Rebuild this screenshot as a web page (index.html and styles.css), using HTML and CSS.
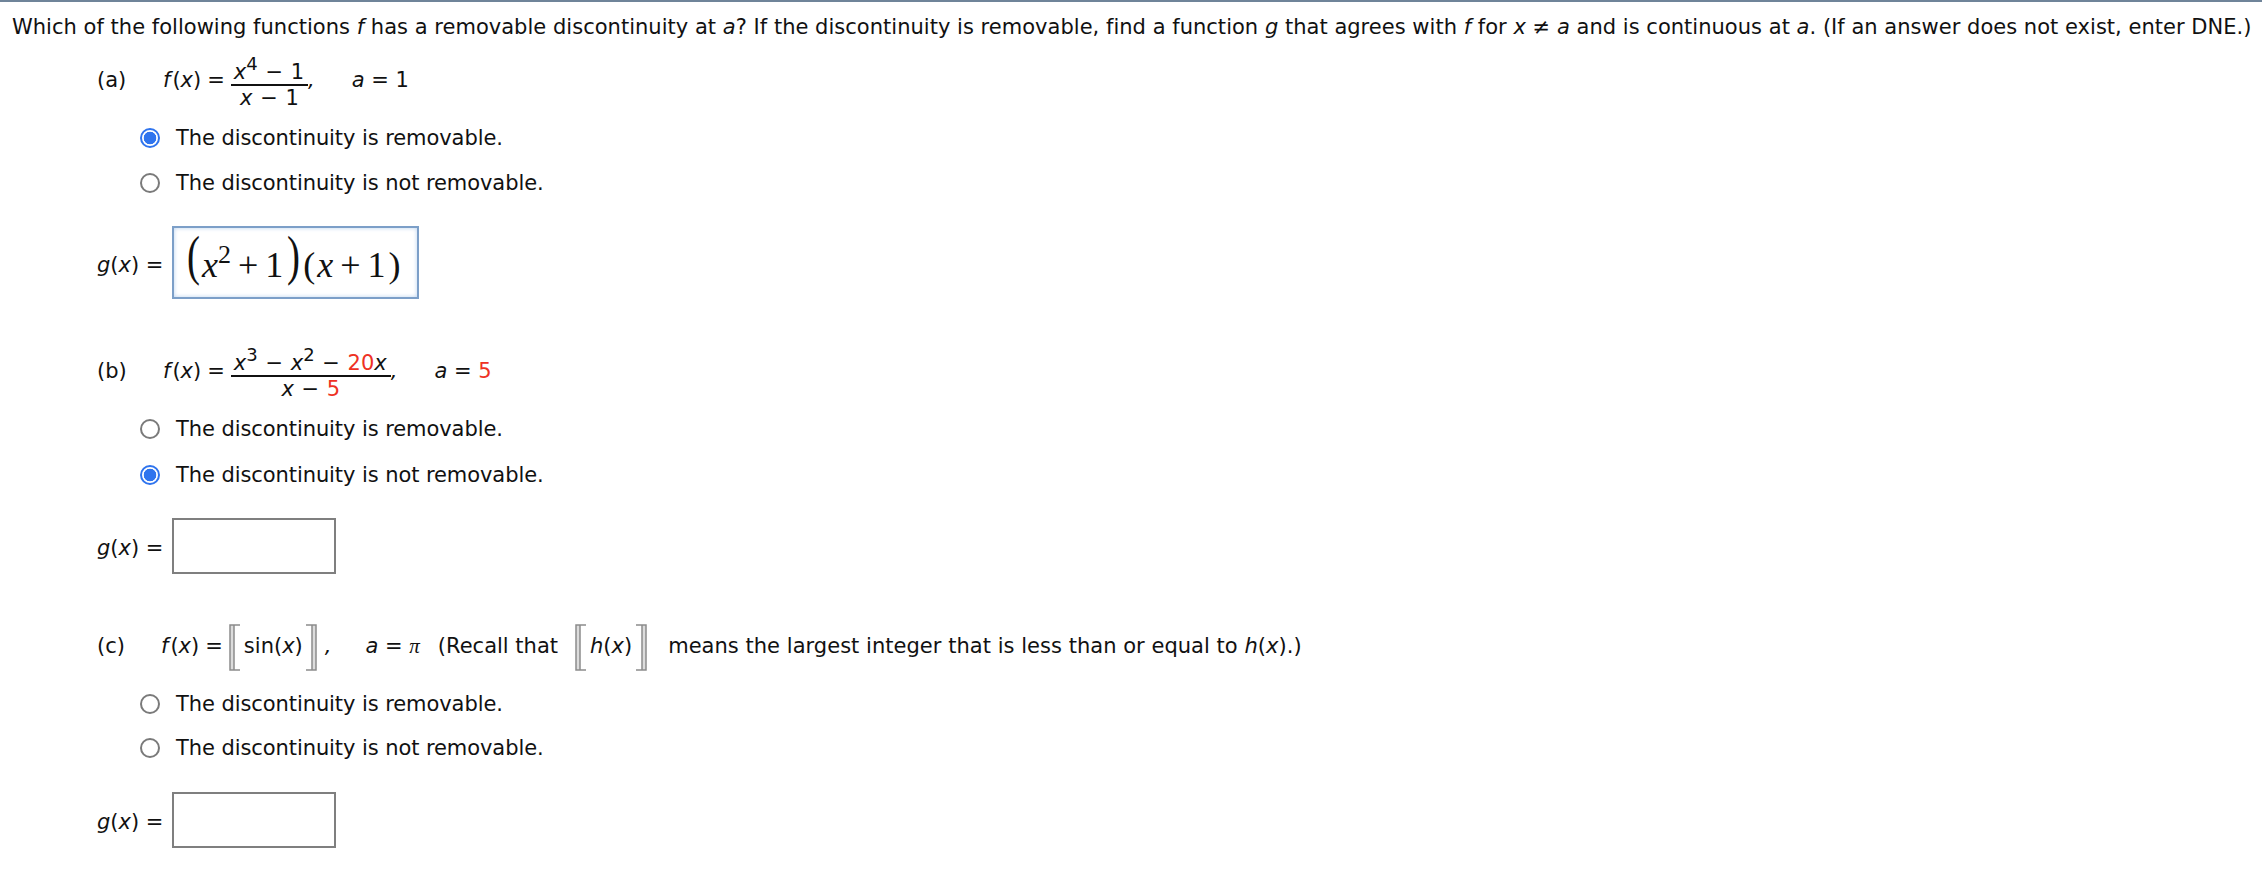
FILE: index.html
```html
<!DOCTYPE html>
<html lang="en">
<head>
<meta charset="utf-8">
<title>Removable discontinuity</title>
<link rel="stylesheet" href="styles.css">
</head>
<body>
<main class="sheet">
  <p class="prompt">Which of the following functions <i>f</i> has a removable discontinuity at <i>a</i>? If the discontinuity is removable, find a function <i>g</i> that agrees with <i>f</i> for <i>x</i> ≠ <i>a</i> and is continuous at <i>a</i>. (If an answer does not exist, enter DNE.)</p>

  <section class="part part-a">
    <div class="formula">
      <span class="tag">(a)</span>
      <span class="expr"><i class="fn">f</i>(<i>x</i>)<span class="eq">=</span><span class="frac"><span class="num"><i>x</i><sup>4</sup> − 1</span><span class="den"><i>x</i> − 1</span></span><i class="comma">,</i></span>
      <span class="point"><i>a</i> = 1</span>
    </div>
    <label class="choice first"><input type="radio" name="a" checked><span>The discontinuity is removable.</span></label>
    <label class="choice"><input type="radio" name="a"><span>The discontinuity is not removable.</span></label>
    <div class="answer answer-a">
      <span class="g"><i>g</i>(<i>x</i>) =</span>
      <div class="mathbox focused">
        <span class="big big-open">(</span><i class="mx">x</i><sup class="ms">2</sup><span class="mop">+</span><span class="md">1</span><span class="big big-close">)</span><span class="mid mid-open">(</span><i class="mx">x</i><span class="mop">+</span><span class="md">1</span><span class="mid mid-close">)</span>
      </div>
    </div>
  </section>

  <section class="part part-b">
    <div class="formula">
      <span class="tag">(b)</span>
      <span class="expr"><i class="fn">f</i>(<i>x</i>)<span class="eq">=</span><span class="frac"><span class="num"><i>x</i><sup>3</sup> − <i>x</i><sup>2</sup> − <span class="red">20</span><i>x</i></span><span class="den"><i>x</i> − <span class="red">5</span></span></span><i class="comma">,</i></span>
      <span class="point"><i>a</i> = <span class="red">5</span></span>
    </div>
    <label class="choice first"><input type="radio" name="b"><span>The discontinuity is removable.</span></label>
    <label class="choice"><input type="radio" name="b" checked><span>The discontinuity is not removable.</span></label>
    <div class="answer">
      <span class="g"><i>g</i>(<i>x</i>) =</span>
      <input class="field" type="text" aria-label="g of x">
    </div>
  </section>

  <section class="part part-c">
    <div class="formula">
      <span class="tag tag-c">(c)</span>
      <span class="expr"><i class="fn">f</i>(<i>x</i>)<span class="eq">=</span></span>
      <svg class="bk bk-l" viewBox="0 0 12 47" aria-hidden="true"><path class="bk-fill" d="M1 1h4v45H1z"/><path d="M11 1H1v45h10M5 1v45"/></svg>
      <span class="inner">sin(<i>x</i>)</span>
      <svg class="bk bk-r" viewBox="0 0 12 47" aria-hidden="true"><path class="bk-fill" d="M7 1h4v45H7z"/><path d="M1 1h10v45H1M7 1v45"/></svg>
      <i class="comma-c">,</i>
      <span class="point-c"><i>a</i> = <span class="pi">π</span></span>
      <span class="recall">(Recall that</span>
      <svg class="bk bk-l2" viewBox="0 0 12 47" aria-hidden="true"><path class="bk-fill" d="M1 1h4v45H1z"/><path d="M11 1H1v45h10M5 1v45"/></svg>
      <span class="inner"><i>h</i>(<i>x</i>)</span>
      <svg class="bk bk-r bk-r2" viewBox="0 0 12 47" aria-hidden="true"><path class="bk-fill" d="M7 1h4v45H7z"/><path d="M1 1h10v45H1M7 1v45"/></svg>
      <span class="means">means the largest integer that is less than or equal to <i>h</i>(<i>x</i>).)</span>
    </div>
    <label class="choice first"><input type="radio" name="c"><span>The discontinuity is removable.</span></label>
    <label class="choice"><input type="radio" name="c"><span>The discontinuity is not removable.</span></label>
    <div class="answer">
      <span class="g"><i>g</i>(<i>x</i>) =</span>
      <input class="field" type="text" aria-label="g of x">
    </div>
  </section>
</main>
</body>
</html>
```
FILE: styles.css
```css
* { box-sizing: border-box; }
html, body { margin: 0; padding: 0; background: #fff; }
body {
  font-family: "DejaVu Sans", Verdana, sans-serif;
  font-size: 21px;
  color: #111;
  overflow: hidden;
}
.sheet { border-top: 2px solid #6f8499; height: 878px; }
.prompt {
  margin: 10px 0 0 12px;
  line-height: 30px;
  height: 30px;
  white-space: nowrap;
  letter-spacing: .022px;
}
.part { padding-left: 97px; }
.part-a { margin-top: 18px; }
.part-b { margin-top: 52px; }
.part-c { margin-top: 52px; }

.formula {
  display: flex;
  align-items: baseline;
  height: 40px;
  line-height: 40px;
  white-space: nowrap;
}
.tag { width: 66px; }
.tag-c { width: 64px; }
.fn { margin-right: 2px; }
.eq { margin: 0 6px; }
.frac sup { font-size: 18px; line-height: 0; vertical-align: 9px; }
.frac {
  display: inline-flex;
  flex-direction: column;
  align-items: center;
  vertical-align: 8px;
}
.num {
  line-height: 24px;
  border-bottom: 2px solid #111;
  padding: 0 4px 0 3px;
  word-spacing: 1px;
}
.den { line-height: 24px; word-spacing: 1px; }
.point { margin-left: 37px; }
.red { color: #ee3124; }
.choice {
  display: flex;
  align-items: center;
  height: 30px;
  line-height: 30px;
  padding-left: 43px;
  margin-top: 15px;
  letter-spacing: -.08px;
}
.choice.first { margin-top: 23px; }
.part-b .choice { margin-top: 16px; }
.part-b .choice.first { margin-top: 23px; }
.part-c .choice { margin-top: 14px; }
.part-c .choice.first { margin-top: 23px; }
.choice input {
  appearance: none;
  -webkit-appearance: none;
  width: 20px;
  height: 20px;
  margin: 0 16px 0 0;
  border: 2px solid #7a7a7a;
  border-radius: 50%;
  background: #fff;
  flex: none;
}
.choice input:checked {
  border-color: #2f74ee;
  background: radial-gradient(circle, #2f74ee 0 6px, #fff 6.6px);
}
.answer {
  display: flex;
  align-items: center;
  height: 56px;
  margin-top: 29px;
}
.part-b .answer { margin-top: 28px; }
.answer-a { height: 73px; margin-top: 28px; }
.g { width: 75px; padding-top: 4px; white-space: nowrap; }
.field {
  width: 164px;
  height: 56px;
  border: 2px solid #7f7f7f;
  background: #fff;
  margin: 0;
  padding: 0;
}
.mathbox {
  width: 247px;
  height: 73px;
  border: 2px solid #7c9fc8;
  box-shadow: inset 0 0 4px #b9d1ee;
  font-family: "Liberation Serif", "Times New Roman", serif;
  font-size: 36px;
  color: #111;
  display: flex;
  align-items: baseline;
  padding: 0 0 0 11px;
  line-height: 62px;
  white-space: nowrap;
}
.ms { font-size: 26px; line-height: 0; position: relative; top: -14px; vertical-align: baseline; }
.mop { margin: 0 7px 0 7px; }
.big {
  font-size: 54px;
  display: inline-block;
  width: 14px;
  text-align: center;
  transform: translateY(-3px) scaleX(.72);
}
.big-open { margin-right: 3px; }
.big-close { margin-left: 2px; }
.mid { display: inline-block; width: 12px; text-align: center; }
.mid-open { margin: 0 2px 0 4px; }
.mid-close { margin-left: 3px; }

.bk { width: 12px; height: 47px; flex: none; align-self: center; fill: none; stroke: #8c8c8c; stroke-width: 1.5; }
.bk .bk-fill { fill: #dcdcdc; stroke: none; }
.bk-l { margin-left: 0; margin-right: 3px; }
.bk-r { margin-left: 2px; }
.bk-r2 { margin-left: 3px; }
.bk-l2 { margin-left: 17px; margin-right: 3px; }
.formula .bk { position: relative; top: 1px; }
.comma-c { margin-left: 8px; }
.point-c { margin-left: 34px; }
.pi { font-family: "Liberation Serif", serif; font-style: italic; }
.recall { margin-left: 18px; }
.means { margin-left: 21px; letter-spacing: .03px; }
```
